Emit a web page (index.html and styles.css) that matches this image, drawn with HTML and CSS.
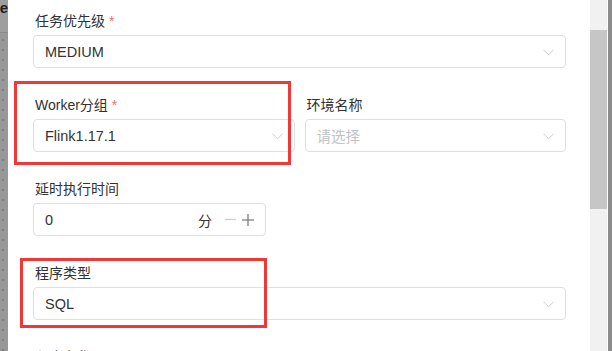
FILE: index.html
```html
<!DOCTYPE html>
<html lang="zh-CN">
<head>
<meta charset="utf-8">
<link rel="stylesheet" href="styles.css">
</head>
<body>
<div class="page">
  <div class="bg-left">
    <div class="bg-head"><span class="bg-title">Pipeline</span></div>
    <div class="bg-body"></div>
  </div>

  <div class="modal">
    <div class="form">
      <div class="item">
        <div class="label">任务优先级 <span class="req">*</span></div>
        <div class="control select">
          <span class="value">MEDIUM</span>
          <svg class="chev" width="11" height="7" viewBox="0 0 11 7"><polyline points="0.5,0.8 5.5,5.8 10.5,0.8" fill="none" stroke="#c8cbd2" stroke-width="1"/></svg>
        </div>
      </div>

      <div class="row">
        <div class="item">
          <div class="label">Worker分组 <span class="req">*</span></div>
          <div class="control select">
            <span class="value">Flink1.17.1</span>
            <svg class="chev" width="11" height="7" viewBox="0 0 11 7"><polyline points="0.5,0.8 5.5,5.8 10.5,0.8" fill="none" stroke="#c8cbd2" stroke-width="1"/></svg>
          </div>
        </div>
        <div class="item">
          <div class="label">环境名称</div>
          <div class="control select">
            <span class="value placeholder">请选择</span>
            <svg class="chev" width="11" height="7" viewBox="0 0 11 7"><polyline points="0.5,0.8 5.5,5.8 10.5,0.8" fill="none" stroke="#c8cbd2" stroke-width="1"/></svg>
          </div>
        </div>
      </div>

      <div class="item">
        <div class="label">延时执行时间</div>
        <div class="control number">
          <span class="value">0</span>
          <span class="suffix">分</span>
          <span class="step minus">
            <svg width="11" height="11" viewBox="0 0 11 11"><line x1="0" y1="5.5" x2="11" y2="5.5" stroke="#c8cbd2" stroke-width="1.2"/></svg>
          </span>
          <span class="step plus">
            <svg width="12" height="12" viewBox="0 0 12 12"><line x1="0" y1="6" x2="12" y2="6" stroke="#7c7f86" stroke-width="1.3"/><line x1="6" y1="0" x2="6" y2="12" stroke="#7c7f86" stroke-width="1.3"/></svg>
          </span>
        </div>
      </div>

      <div class="item">
        <div class="label">程序类型</div>
        <div class="control select">
          <span class="value">SQL</span>
          <svg class="chev" width="11" height="7" viewBox="0 0 11 7"><polyline points="0.5,0.8 5.5,5.8 10.5,0.8" fill="none" stroke="#c8cbd2" stroke-width="1"/></svg>
        </div>
      </div>

      <div class="item">
        <div class="label">程序名称</div>
      </div>
    </div>

    <div class="mark mark-worker"></div>
    <div class="mark mark-type"></div>
  </div>

  <div class="scrollbar"><div class="thumb"></div></div>
  <div class="gap"></div>
  <div class="bg-right"></div>
</div>
</body>
</html>
```

FILE: styles.css
```css
* { box-sizing: border-box; }

html, body {
  margin: 0;
  padding: 0;
  width: 612px;
  height: 351px;
  overflow: hidden;
  background: #fff;
}

body {
  font-family: "Liberation Sans", "Noto Sans CJK SC", sans-serif;
  font-size: 14px;
  color: #333;
}

.page {
  display: flex;
  width: 612px;
  height: 351px;
}

/* background page under the mask, left side */
.bg-left {
  width: 8px;
  flex: none;
  display: flex;
  flex-direction: column;
}

.bg-head {
  height: 33px;
  background: #9e9e9e;
  border-bottom: 1px solid #8c8c8c;
  display: flex;
  justify-content: flex-end;
  overflow: hidden;
}

.bg-title {
  font-weight: bold;
  font-size: 15px;
  line-height: 16px;
  color: #1e1e1e;
  white-space: nowrap;
  margin-top: 0;
}

.bg-body {
  flex: 1;
  background-color: #989898;
  background-image: radial-gradient(circle, #7d7d7d 0.8px, transparent 1px);
  background-size: 8px 10px;
  background-position: -1px 2px;
}

/* modal */
.modal {
  position: relative;
  width: 582px;
  flex: none;
  background: #fff;
  overflow: hidden;
}

.form {
  padding: 10px 24px 0 25px;
  display: flex;
  flex-direction: column;
  gap: 26px;
}

.row {
  display: grid;
  grid-template-columns: 1fr 1fr;
  column-gap: 10px;
}

.label {
  height: 22px;
  line-height: 22px;
  margin: 0 0 3px 2px;
  font-size: 14px;
  color: #303133;
  white-space: nowrap;
}

.req {
  color: #f56c6c;
  font-family: "Liberation Sans", sans-serif;
}

.control {
  height: 33px;
  border: 1px solid #dcdfe6;
  border-radius: 4px;
  background: #fff;
  display: flex;
  align-items: center;
  padding: 0 11px 0 11px;
}

.value {
  flex: 1;
  font-size: 14.5px;
  color: #333;
  white-space: nowrap;
}

.placeholder {
  color: #bfc2c8;
}

.chev {
  flex: none;
  margin-top: 2px;
}

.number {
  width: 233px;
}

.suffix {
  font-size: 14px;
  color: #333;
  margin-right: 13px;
}

.step {
  display: flex;
  align-items: center;
}

.minus {
  margin-right: 6px;
}

/* annotation boxes */
.mark {
  position: absolute;
  border: 3px solid #f23737;
}

.mark-worker {
  left: 6px;
  top: 81px;
  width: 277px;
  height: 84px;
}

.mark-type {
  left: 12px;
  top: 258px;
  width: 247px;
  height: 70px;
}

/* scrollbar */
.scrollbar {
  width: 17px;
  flex: none;
  background: #f1f1f1;
  padding-top: 30px;
}

.thumb {
  height: 179px;
  background: #c6c6c6;
}

.gap {
  width: 1px;
  flex: none;
  background: #fff;
}

.bg-right {
  width: 4px;
  flex: none;
  background: #8c8c8c;
}
```
